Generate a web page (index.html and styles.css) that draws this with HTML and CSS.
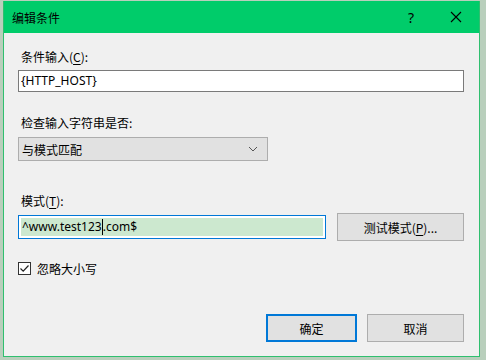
FILE: index.html
```html
<!DOCTYPE html>
<html lang="zh-CN">
<head>
    <meta charset="UTF-8">
    <title>编辑条件</title>
    <link rel="stylesheet" href="styles.css">
</head>
<body>
    <div class="desktop">
        <div class="dialog">
            <div class="titlebar">
                <span class="title">编辑条件</span>
                <span class="help">?</span>
                <span class="close">
                    <svg width="12" height="12" viewBox="0 0 12 12">
                        <path d="M1 1 L11 11 M11 1 L1 11" stroke="#000" stroke-width="1.1" fill="none"/>
                    </svg>
                </span>
            </div>

            <div class="content">
                <label class="field-label label-first">条件输入(<u>C</u>):</label>
                <div class="textbox">{HTTP_HOST}</div>

                <label class="field-label label-second">检查输入字符串是否:</label>
                <div class="select">
                    <span>与模式匹配</span>
                    <svg width="10" height="6" viewBox="0 0 10 6">
                        <path d="M1 1 L5 5 L9 1" stroke="#555" stroke-width="1" fill="none"/>
                    </svg>
                </div>

                <label class="field-label label-third">模式(<u>T</u>):</label>
                <div class="pattern-row">
                    <div class="textbox pattern focused">
                        <span class="selection">^www.test123<span class="caret"></span>.com$</span>
                    </div>
                    <button class="btn btn-test">测试模式(<u>P</u>)...</button>
                </div>

                <div class="check-row">
                    <span class="checkbox">
                        <svg width="11" height="11" viewBox="0 0 11 11">
                            <path d="M1.5 5.5 L4.2 8.2 L9.5 2.5" stroke="#222" stroke-width="1.2" fill="none"/>
                        </svg>
                    </span>
                    <span>忽略大小写</span>
                </div>

                <div class="actions">
                    <button class="btn btn-ok">确定</button>
                    <button class="btn btn-cancel">取消</button>
                </div>
            </div>
        </div>
    </div>
</body>
</html>
```

FILE: styles.css
```css
* {
    margin: 0;
    padding: 0;
    box-sizing: border-box;
}

body {
    width: 486px;
    height: 360px;
    overflow: hidden;
    background-color: #b9cfbc;
    font-family: "Noto Sans CJK SC", "Noto Sans", sans-serif;
    font-size: 12px;
    color: #000;
}

.desktop {
    padding: 1px 6px 3px 3px;
}

.dialog {
    width: 477px;
    height: 356px;
    background-color: #f0f0f0;
    border: 1px solid #2fbf6f;
    border-top: none;
    display: flex;
    flex-direction: column;
}

.titlebar {
    height: 32px;
    background-color: #00cc6a;
    display: flex;
    align-items: center;
    padding-left: 8px;
}

.title {
    flex: 1;
    font-size: 12px;
    padding-top: 1px;
}

.help {
    width: 46px;
    text-align: center;
    font-family: "Noto Sans", sans-serif;
    font-size: 14px;
    padding-left: 2px;
}

.close {
    width: 46px;
    height: 32px;
    display: flex;
    align-items: center;
    justify-content: center;
}

.content {
    padding: 0 15px 0 14px;
    display: flex;
    flex-direction: column;
}

.field-label {
    display: block;
    line-height: 16px;
    height: 16px;
    padding-left: 3px;
}

.field-label u, .btn u {
    text-decoration: underline;
    text-underline-offset: 2px;
}

.label-first {
    margin-top: 16px;
}

.label-second {
    margin-top: 23px;
}

.label-third {
    margin-top: 32px;
}

.textbox {
    margin-top: 5px;
    height: 22px;
    background-color: #fff;
    border: 1px solid #7a7a7a;
    font-family: "Noto Sans", "Noto Sans CJK SC", sans-serif;
    font-size: 12px;
    line-height: 20px;
    padding-left: 2px;
}

.select {
    margin-top: 6px;
    width: 250px;
    height: 24px;
    background-color: #e1e1e1;
    border: 1px solid #adadad;
    display: flex;
    align-items: center;
    justify-content: space-between;
    padding: 0 9px 0 3px;
}

.pattern-row {
    margin-top: 4px;
    display: flex;
    align-items: center;
    gap: 11px;
}

.pattern {
    margin-top: 0;
    width: 308px;
    height: 24px;
    padding: 2px;
}

.focused {
    border-color: #0078d7;
}

.selection {
    display: block;
    height: 18px;
    line-height: 18px;
    background-color: #cce8cf;
    padding-left: 1px;
}

.caret {
    display: inline-block;
    width: 1px;
    height: 16px;
    background-color: #000;
    vertical-align: -4px;
}

.btn {
    font-family: "Noto Sans CJK SC", "Noto Sans", sans-serif;
    font-size: 12px;
    color: #000;
    background-color: #e1e1e1;
    border: 1px solid #adadad;
    cursor: pointer;
}

.btn-test {
    width: 127px;
    height: 28px;
}

.check-row {
    margin-top: 20px;
    display: flex;
    align-items: center;
    gap: 6px;
    height: 14px;
}

.checkbox {
    width: 13px;
    height: 13px;
    border: 1px solid #333;
    background-color: #fff;
    display: flex;
    align-items: center;
    justify-content: center;
}

.actions {
    margin-top: 39px;
    display: flex;
    justify-content: flex-end;
    gap: 10px;
}

.btn-ok {
    width: 91px;
    height: 28px;
    border: 2px solid #0078d7;
}

.btn-cancel {
    width: 97px;
    height: 28px;
}
```
